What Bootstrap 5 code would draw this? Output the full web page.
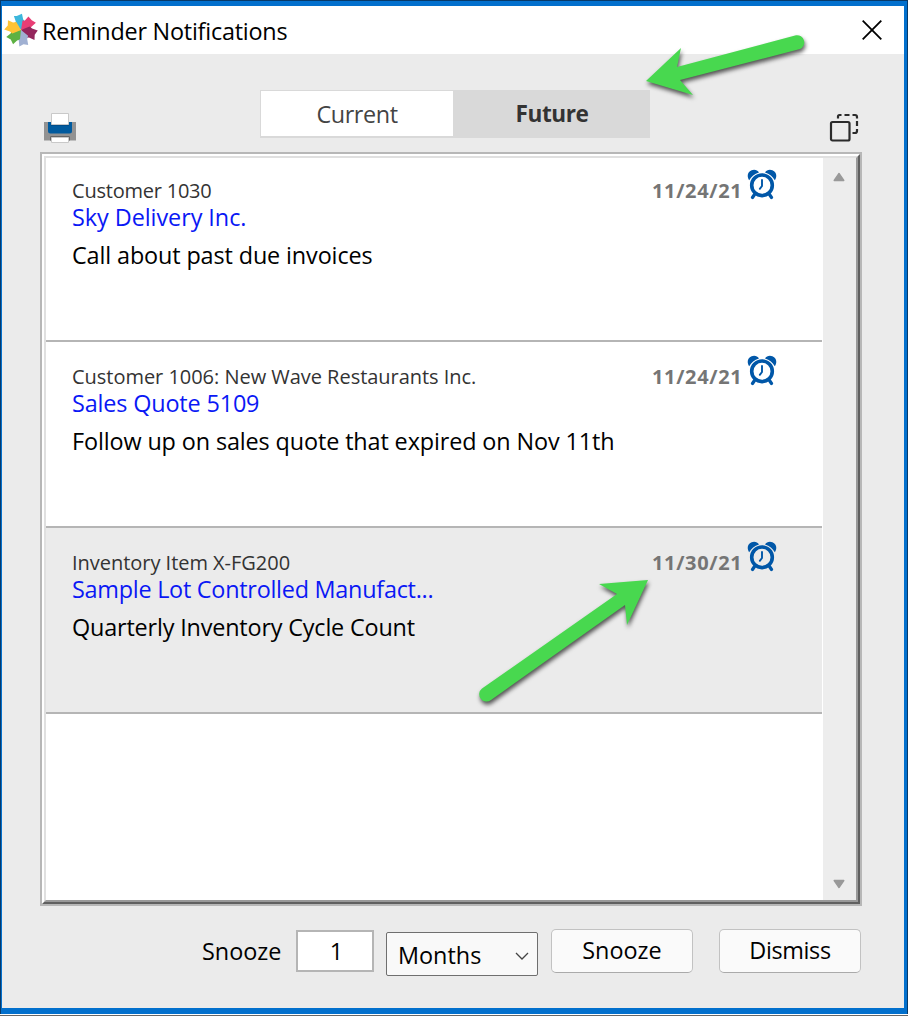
<!DOCTYPE html>
<html lang="en">
<head>
<meta charset="utf-8">
<meta name="viewport" content="width=device-width, initial-scale=1">
<title>Reminder Notifications</title>
<link href="https://cdn.jsdelivr.net/npm/bootstrap@5.3.0/dist/css/bootstrap.min.css" rel="stylesheet">
<style>
body{font-family:"Open Sans","Noto Sans",sans-serif;font-size:23.4px;line-height:27px;color:#000;background:#063a6b}
.frame{height:1016px;padding:1px 1px 2px;background:linear-gradient(#fff,#fff) 0 1014px/100% 1px no-repeat,linear-gradient(#666,#666) 0 1015px/100% 1px no-repeat,#063a6b}
.win{width:906px;height:1013px;background:#ebebeb;border-style:solid;border-width:5px 3px 6px 1px;border-color:#0270cd}
.titlebar{height:48px;padding:0 20px 0 2px}
.titlebar .caption-text{letter-spacing:-.22px;padding-top:2px}
.tools{height:98px;padding:0 3px 0 42px}
.tabs{width:390px;height:48px;margin:36px 0 0 184px}
.tab-item,.tab-item.btn:hover{line-height:46px;color:#444;border:1px solid #d9d9d9;border-bottom-width:2px;border-radius:0;padding:0;font-size:23.4px;letter-spacing:-.4px}
.tab-item.btn.active{background:#d9d9d9;border-color:#d9d9d9;color:#333;font-size:22.6px;font-weight:700}
.first-tab{width:194px}
.popout{margin-right:42px;margin-bottom:2px}
.panel{width:822px;height:754px;margin-left:38px;border:2px solid #b7b7b7}
.bevel{border:2px solid;border-color:#fff #606060 #606060 #fff}
.bevel2{border:2px solid;border-color:#e0e0e0 #999 #999 #e0e0e0;background:#fff}
.rows{width:776px;margin-right:1px}
.reminder{height:186px;padding:21px 0 0 26px;border-bottom:2px solid #b5b5b5}
.reminder:first-child{height:184px;padding-top:19px}
.reminder.sel{background:#ebebeb}
.src{font-size:20px;color:#333;letter-spacing:-.03px}
.src.tight{letter-spacing:-.22px}
.lnk{color:#0a18f5;text-decoration:none;letter-spacing:-.05px}
.lnk.mid{letter-spacing:-.15px}
.lnk.tight{letter-spacing:-.25px}
.note{margin-top:11px;letter-spacing:-.12px}
.sel .note{letter-spacing:-.17px}
.due{font-size:20px;font-weight:700;color:#757575;width:95px;letter-spacing:.65px}
.clock{margin:-9px 45px 0 0}
.scroller{width:33px;background:#ededed;padding:14px 1px 11px 0}
.foot{padding:23px 0 0 200px}
.amount{width:94px;line-height:45px}
.num{width:78px;height:42px;border:2px solid #b5b5b5;background:#fff;margin:1px 12px 0 0;padding-left:3px;line-height:39px}
.unit{width:152px;height:44px;border:1px solid #6f6f6f;border-radius:2px;background:#f9f9f9;margin:3px 13px 0 0;padding:3px 8px 0 11px}
.push{width:142px;height:44px;padding:0;line-height:38px;font-size:23.4px;color:#000;background:#fafafa;border:1px solid #c2c2c2;border-bottom-color:#aaa;border-radius:5px}
.push span{position:relative;top:-1px}
.dismiss{margin-left:26px;letter-spacing:-.35px}
.arrow{position:absolute;left:0;top:0;pointer-events:none;filter:drop-shadow(1.5px 3px 2px rgba(0,0,0,.65))}
</style>
</head>
<body>
<svg width="0" height="0" class="position-absolute">
<symbol id="alarm" viewBox="0 0 30 32">
<g fill="#0057a8"><path d="M2.200 12.200C-.3 8.500.3 3.700 4.600 2.200C7.500 1 10.500 2 12 4.500C7.500 6 4.200 8.600 2.200 12.200Z"/><path d="M27.800 12.200C30.300 8.500 29.700 3.700 25.400 2.200C22.500 1 19.500 2 18 4.500C22.500 6 25.800 8.600 27.800 12.200Z"/></g>
<g fill="none" stroke="#0057a8" stroke-linecap="round"><circle cx="15" cy="17.300" r="10.300" stroke-width="3.600"/><path d="M7.500 26.500L5.500 29.500M22.500 26.500L24.500 29.500" stroke-width="3.200"/><path d="M15 12V18L12.800 20.800" stroke-width="1.900"/></g>
</symbol>
</svg>
<div class="frame">
<div class="win">
  <header class="titlebar bg-white d-flex align-items-center">
    <svg width="34" height="36" viewBox="5 12 34 36" class="me-1"><g transform="translate(22 30)">
      <path fill="#3db7dc" transform="rotate(-9)" d="M0 0L-6-7L-3.800-9L-4.800-15L-2-14.500L3.500-16L3.800-10L6-7.500Z"/>
      <path fill="#e83e75" transform="rotate(48)" d="M0 0L-6-7.500L-4.500-9L-5-14.500L0-14.500L4.500-16L4.500-10L5.500-7Z"/>
      <path fill="#94265c" transform="rotate(109)" d="M0 0L-6-7L-5-10L-5-16L0-14.500L5-16L4.500-10L6-7Z"/>
      <path fill="#a0b0d2" transform="rotate(170)" d="M0 0L-6-7L-4.500-10L-4.500-16L0-14.500L4.500-16L4-10L6-7Z"/>
      <path fill="#5db143" transform="rotate(227)" d="M0 0L-6-7L-5-10L-5-15.500L0-14L5-15.500L4.500-10L6-7Z"/>
      <path fill="#fec334" transform="rotate(289)" d="M0 0L-6-7L-5-10L-5-16L0-14L5-15.500L4.500-10L6-7Z"/>
    </g></svg>
    <span class="caption-text">Reminder Notifications</span>
    <svg class="ms-auto" width="24" height="24" viewBox="0 0 24 24"><path d="M2.700 2.700L21.300 21.300M21.300 2.700L2.700 21.300" stroke="#000" stroke-width="1.800"/></svg>
  </header>
  <div class="tools d-flex">
    <svg class="mt-auto mb-2" width="32" height="31" viewBox="0 0 32 31"><path fill="#929292" d="M0 9h32v18.500H0z"/><path fill="#005a9e" d="M4 9h24v9q0 2.500-2.500 2.500H6.500q-2.500 0-2.500-2.500z"/><path fill="#003f75" d="M7 9h18v3.500H7z"/><path fill="#fff" stroke="#c9c9c9" d="M7.500.5h17v11h-17z"/><path fill="#666" d="M6 27.500v-3q0-1.500 1-1.500h18q1 0 1 1.500v3z"/><path fill="#fff" stroke="#c9c9c9" d="M7.500 24.500h17v5h-17z"/></svg>
    <div class="tabs d-flex" role="tablist">
      <button class="btn tab-item first-tab bg-white">Current</button>
      <button class="btn tab-item active flex-fill">Future</button>
    </div>
    <svg class="mt-auto ms-auto popout" width="30" height="38" viewBox="0 0 30 38"><g fill="none" stroke="#2b2b2b" stroke-width="2.200"><rect x="2" y="10" width="18.500" height="18.500" rx="1.500"/><path d="M9 6.500V4.500Q9 3 10.500 3H12.500M15.500 3h5M23.500 3h2.500Q28 3 28 5V6.500M28 9v5M28 17v2Q28 21 26 21h-2.500"/></g></svg>
  </div>
  <main class="panel d-flex">
    <div class="bevel d-flex flex-fill"><div class="bevel2 d-flex flex-fill">
      <div class="rows">
        <article class="reminder d-flex"><div class="flex-fill"><div class="src tight">Customer 1030</div><div><a class="lnk" href="#">Sky Delivery Inc.</a></div><div class="note">Call about past due invoices</div></div><div class="due">11/24/21</div><svg class="clock" width="30" height="32"><use href="#alarm"/></svg></article>
        <article class="reminder d-flex"><div class="flex-fill"><div class="src">Customer 1006: New Wave Restaurants Inc.</div><div><a class="lnk mid" href="#">Sales Quote 5109</a></div><div class="note">Follow up on sales quote that expired on Nov 11th</div></div><div class="due">11/24/21</div><svg class="clock" width="30" height="32"><use href="#alarm"/></svg></article>
        <article class="reminder sel d-flex"><div class="flex-fill"><div class="src">Inventory Item X-FG200</div><div><a class="lnk tight" href="#">Sample Lot Controlled Manufact...</a></div><div class="note">Quarterly Inventory Cycle Count</div></div><div class="due">11/30/21</div><svg class="clock" width="30" height="32"><use href="#alarm"/></svg></article>
      </div>
      <div class="scroller d-flex flex-column justify-content-between align-items-center">
        <svg width="12" height="10"><path d="M6 1.500L10.800 8.500H1.200Z" fill="#999" stroke="#999" stroke-width="1.400" stroke-linejoin="round"/></svg>
        <svg width="12" height="10"><path d="M6 8.500L10.800 1.500H1.200Z" fill="#999" stroke="#999" stroke-width="1.400" stroke-linejoin="round"/></svg>
      </div>
    </div></div>
  </main>
  <footer class="foot d-flex">
    <div class="amount">Snooze</div>
    <div class="num text-center">1</div>
    <div class="unit d-flex align-items-center justify-content-between"><span>Months</span><svg width="14" height="10"><path d="M1 2L7 8L13 2" fill="none" stroke="#444" stroke-width="1.300"/></svg></div>
    <button class="btn push"><span>Snooze</span></button>
    <button class="btn push dismiss"><span>Dismiss</span></button>
  </footer>
</div>
</div>
<svg class="arrow" width="908" height="1016"><g fill="#48d84f"><path d="M646 81L681 48L677 67L796 35.300A7.200 7.200 0 0 1 800 49L680 80L693 95Z"/><path d="M648 580L599 584L617 594L482 688.500A7.200 7.200 0 0 0 491 700L625 605L627 625Z"/></g></svg>
<script src="https://cdn.jsdelivr.net/npm/bootstrap@5.3.0/dist/js/bootstrap.bundle.min.js"></script>
</body>
</html>
